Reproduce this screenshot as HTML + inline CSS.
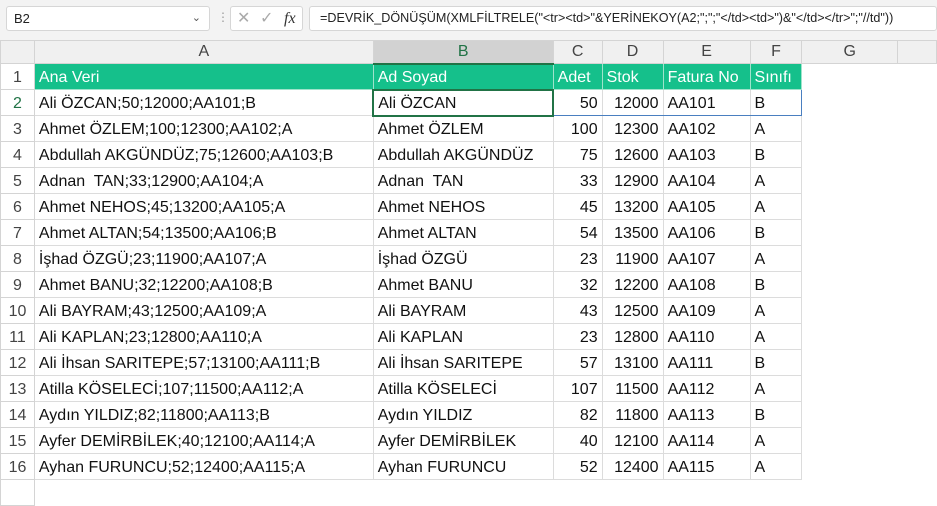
<!DOCTYPE html>
<html><head><meta charset="utf-8"><style>
*{box-sizing:border-box;margin:0;padding:0}
body{width:937px;height:487px;overflow:hidden;background:#fff;font-family:"Liberation Sans",sans-serif;position:relative}
.fb{position:absolute;left:0;top:0;width:937px;height:40px;background:#f3f3f3}
.nb{position:absolute;left:6px;top:6px;width:204px;height:25px;background:#fff;border:1px solid #d6d6d6;border-radius:3px;font-size:13px;line-height:23px;padding-left:7px;color:#222}
.nb .ch{position:absolute;right:8px;top:0;color:#555;font-size:11px}
.ic{position:absolute;left:230px;top:6px;width:73px;height:25px;background:#fff;border:1px solid #d6d6d6;border-radius:3px;color:#aaa;font-size:16px;line-height:23px}
.fx{position:absolute;left:309px;top:6px;width:628px;height:25px;background:#fff;border:1px solid #d6d6d6;border-radius:3px;font-size:12.6px;line-height:23px;padding-left:10px;color:#222;white-space:nowrap;overflow:hidden}
table{position:absolute;left:0;top:40px;border-collapse:collapse;table-layout:fixed}
td{height:26px;border:1px solid #dcdcdc;font-size:16px;padding:2px 4px 0;white-space:nowrap;overflow:hidden;color:#111}
td.e{border:none;border-top:1px solid transparent}
tr.h td{height:23px;background:#f0f0f0;color:#444;text-align:center;font-size:16px;border-color:#d4d4d4;padding:0}
td.r{background:#fff;color:#444;text-align:center;padding:2px 0 0;border-color:#d4d4d4}
tr.g td.d{background:#15c08b;color:#fff;border-color:#9fe3cb}
.n{text-align:right}
tr.h td.sel{background:#d2d2d2;border-bottom:2px solid #217346;color:#217346}
td.rs{color:#217346}
</style></head><body>
<div class="fb">
<div class="nb">B2<span class="ch">&#8964;</span></div>
<div style="position:absolute;left:217px;top:10px;color:#999;font-size:12px">&#8942;</div>
<div class="ic"><span style="position:absolute;left:6px">&#10005;</span><span style="position:absolute;left:29px">&#10003;</span><span style="position:absolute;left:53px;color:#333;font-family:'Liberation Serif',serif;font-style:italic">fx</span></div>
<div class="fx">=DEVRİK_DÖNÜŞÜM(XMLFİLTRELE("&lt;tr&gt;&lt;td&gt;"&amp;YERİNEKOY(A2;";";"&lt;/td&gt;&lt;td&gt;")&amp;"&lt;/td&gt;&lt;/tr&gt;";"//td"))</div>
</div>
<table>
<colgroup><col style="width:34px"><col style="width:339px"><col style="width:180px"><col style="width:49px"><col style="width:61px"><col style="width:87px"><col style="width:52px"><col style="width:96px"><col style="width:39px"></colgroup>
<tr class="h"><td style="background:#f0f0f0"></td><td>A</td><td class="sel">B</td><td>C</td><td>D</td><td>E</td><td>F</td><td>G</td><td></td></tr>
<tr class="g"><td class="r">1</td><td class="d">Ana Veri</td><td class="d">Ad Soyad</td><td class="d">Adet</td><td class="d">Stok</td><td class="d">Fatura No</td><td class="d">Sınıfı</td><td class="e"></td><td class="e"></td></tr>
<tr><td class="r rs">2</td><td>Ali ÖZCAN;50;12000;AA101;B</td><td style="border:2px solid #217346">Ali ÖZCAN</td><td class="n" style="border-top:1px solid #4a7fc0;border-bottom:1px solid #4a7fc0">50</td><td class="n" style="border-top:1px solid #4a7fc0;border-bottom:1px solid #4a7fc0">12000</td><td style="border-top:1px solid #4a7fc0;border-bottom:1px solid #4a7fc0">AA101</td><td style="border:1px solid #4a7fc0;border-left-color:#dcdcdc">B</td><td class="e"></td><td class="e"></td></tr>
<tr><td class="r">3</td><td>Ahmet ÖZLEM;100;12300;AA102;A</td><td>Ahmet ÖZLEM</td><td class="n">100</td><td class="n">12300</td><td>AA102</td><td>A</td><td class="e"></td><td class="e"></td></tr>
<tr><td class="r">4</td><td>Abdullah AKGÜNDÜZ;75;12600;AA103;B</td><td>Abdullah AKGÜNDÜZ</td><td class="n">75</td><td class="n">12600</td><td>AA103</td><td>B</td><td class="e"></td><td class="e"></td></tr>
<tr><td class="r">5</td><td>Adnan&nbsp; TAN;33;12900;AA104;A</td><td>Adnan&nbsp; TAN</td><td class="n">33</td><td class="n">12900</td><td>AA104</td><td>A</td><td class="e"></td><td class="e"></td></tr>
<tr><td class="r">6</td><td>Ahmet NEHOS;45;13200;AA105;A</td><td>Ahmet NEHOS</td><td class="n">45</td><td class="n">13200</td><td>AA105</td><td>A</td><td class="e"></td><td class="e"></td></tr>
<tr><td class="r">7</td><td>Ahmet ALTAN;54;13500;AA106;B</td><td>Ahmet ALTAN</td><td class="n">54</td><td class="n">13500</td><td>AA106</td><td>B</td><td class="e"></td><td class="e"></td></tr>
<tr><td class="r">8</td><td>İşhad ÖZGÜ;23;11900;AA107;A</td><td>İşhad ÖZGÜ</td><td class="n">23</td><td class="n">11900</td><td>AA107</td><td>A</td><td class="e"></td><td class="e"></td></tr>
<tr><td class="r">9</td><td>Ahmet BANU;32;12200;AA108;B</td><td>Ahmet BANU</td><td class="n">32</td><td class="n">12200</td><td>AA108</td><td>B</td><td class="e"></td><td class="e"></td></tr>
<tr><td class="r">10</td><td>Ali BAYRAM;43;12500;AA109;A</td><td>Ali BAYRAM</td><td class="n">43</td><td class="n">12500</td><td>AA109</td><td>A</td><td class="e"></td><td class="e"></td></tr>
<tr><td class="r">11</td><td>Ali KAPLAN;23;12800;AA110;A</td><td>Ali KAPLAN</td><td class="n">23</td><td class="n">12800</td><td>AA110</td><td>A</td><td class="e"></td><td class="e"></td></tr>
<tr><td class="r">12</td><td>Ali İhsan SARITEPE;57;13100;AA111;B</td><td>Ali İhsan SARITEPE</td><td class="n">57</td><td class="n">13100</td><td>AA111</td><td>B</td><td class="e"></td><td class="e"></td></tr>
<tr><td class="r">13</td><td>Atilla KÖSELECİ;107;11500;AA112;A</td><td>Atilla KÖSELECİ</td><td class="n">107</td><td class="n">11500</td><td>AA112</td><td>A</td><td class="e"></td><td class="e"></td></tr>
<tr><td class="r">14</td><td>Aydın YILDIZ;82;11800;AA113;B</td><td>Aydın YILDIZ</td><td class="n">82</td><td class="n">11800</td><td>AA113</td><td>B</td><td class="e"></td><td class="e"></td></tr>
<tr><td class="r">15</td><td>Ayfer DEMİRBİLEK;40;12100;AA114;A</td><td>Ayfer DEMİRBİLEK</td><td class="n">40</td><td class="n">12100</td><td>AA114</td><td>A</td><td class="e"></td><td class="e"></td></tr>
<tr><td class="r">16</td><td>Ayhan FURUNCU;52;12400;AA115;A</td><td>Ayhan FURUNCU</td><td class="n">52</td><td class="n">12400</td><td>AA115</td><td>A</td><td class="e"></td><td class="e"></td></tr>
<tr><td class="r"></td><td class="e"></td><td class="e"></td><td class="e"></td><td class="e"></td><td class="e"></td><td class="e"></td><td class="e"></td><td class="e"></td></tr>
</table>
</body></html>
